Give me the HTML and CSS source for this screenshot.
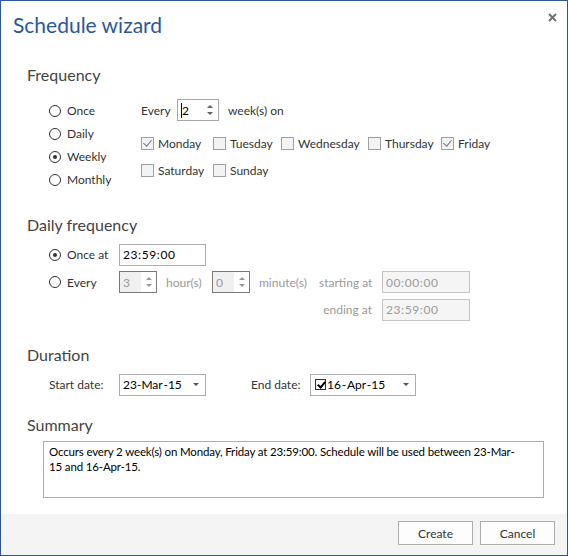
FILE: index.html
```html
<!DOCTYPE html>
<html>
<head>
    <meta charset="UTF-8">
    <meta name="viewport" content="width=device-width, initial-scale=1.0">
    <title>Schedule wizard</title>
    <link rel="stylesheet" href="styles.css">
</head>
<body>
    <div class="dialog">
        <header class="title-bar">
            <h1>Schedule wizard</h1>
            <svg class="close" width="9" height="9" viewBox="0 0 9 9"><path d="M1 1L8 8M8 1L1 8" stroke="#707070" stroke-width="2"/></svg>
        </header>

        <main class="content">
            <section class="group freq-group">
                <h2>Frequency</h2>
                <div class="freq">
                    <div class="radios">
                        <label class="opt"><span class="radio"></span>Once</label>
                        <label class="opt"><span class="radio"></span>Daily</label>
                        <label class="opt"><span class="radio on"></span>Weekly</label>
                        <label class="opt"><span class="radio"></span>Monthly</label>
                    </div>
                    <div class="weekly">
                        <div class="every-row">
                            <span class="every-lbl">Every</span>
                            <span class="spin week-spin"><span class="val"><i class="caret"></i>2</span><span class="arrows"><b class="up"></b><b class="down"></b></span></span>
                            <span class="weeks-lbl">week(s) on</span>
                        </div>
                        <div class="days first">
                            <label class="day w-mon"><span class="check on"></span>Monday</label>
                            <label class="day w-tue"><span class="check"></span>Tuesday</label>
                            <label class="day w-wed"><span class="check"></span>Wednesday</label>
                            <label class="day w-thu"><span class="check"></span>Thursday</label>
                            <label class="day"><span class="check on"></span>Friday</label>
                        </div>
                        <div class="days">
                            <label class="day w-mon"><span class="check"></span>Saturday</label>
                            <label class="day"><span class="check"></span>Sunday</label>
                        </div>
                    </div>
                </div>
            </section>

            <section class="group daily-group">
                <h2>Daily frequency</h2>
                <div class="row r1">
                    <label class="opt lbl-col"><span class="radio on"></span>Once at</label>
                    <span class="box time">23:59:00</span>
                </div>
                <div class="row r2">
                    <label class="opt lbl-col"><span class="radio"></span>Every</label>
                    <span class="spin small off"><span class="val">3</span><span class="arrows"><b class="up"></b><b class="down"></b></span></span>
                    <span class="muted unit hours">hour(s)</span>
                    <span class="spin small off"><span class="val">0</span><span class="arrows"><b class="up"></b><b class="down"></b></span></span>
                    <span class="muted unit minutes">minute(s)</span>
                    <span class="muted range-lbl">starting at</span>
                    <span class="box time range off">00:00:00</span>
                </div>
                <div class="row r3">
                    <span class="muted range-lbl">ending at</span>
                    <span class="box time range off">23:59:00</span>
                </div>
            </section>

            <section class="group duration-group">
                <h2>Duration</h2>
                <div class="row">
                    <span class="lbl-col">Start date:</span>
                    <span class="box combo start"><span>23-Mar&#8202;-15</span><b class="drop"></b></span>
                    <span class="end-lbl">End date:</span>
                    <span class="box combo end"><span><span class="tick"></span>16&#8202;-&#8202;Apr&#8202;-15</span><b class="drop"></b></span>
                </div>
            </section>

            <section class="group summary-group">
                <h2>Summary</h2>
                <div class="summary">Occurs every 2 week(s) on Monday, Friday at 23:59:00. Schedule will be used between 23-Mar-15 and 16-Apr-15.</div>
            </section>
        </main>

        <footer class="buttons">
            <button>Create</button>
            <button>Cancel</button>
        </footer>
    </div>
</body>
</html>
```

FILE: styles.css
```css
* { box-sizing: border-box; }
body { margin: 0; font-family: Lato, "Open Sans", sans-serif; font-size: 12px; color: #333; background: #fff; }

.dialog { width: 568px; height: 556px; border: 1px solid #2b579a; display: flex; flex-direction: column; background: #fff; }

.title-bar { display: flex; justify-content: space-between; align-items: flex-start; padding: 9px 10px 0 12px; height: 48px; }
.title-bar h1 { margin: 0; font-size: 21px; font-weight: normal; line-height: 30px; color: #2b579a; }
.close { margin-top: 3px; }

.content { flex: 1; padding-left: 26px; }
.group h2 { margin: 0; font-size: 16px; font-weight: normal; line-height: 20px; color: #444; }
.freq-group { margin-top: 16px; }
.daily-group { margin-top: 24px; }
.duration-group { margin-top: 22px; }
.summary-group { margin-top: 17px; }

.freq { display: flex; margin-top: 14px; padding-left: 22px; }
.radios { width: 92px; display: flex; flex-direction: column; }
.opt { display: flex; align-items: center; height: 23px; }

.radio { width: 12px; height: 12px; border: 1px solid #333; border-radius: 50%; margin-right: 6px; display: flex; align-items: center; justify-content: center; background: #fff; }
.radio.on::after { content: ""; width: 4px; height: 4px; border-radius: 50%; background: #333; }

.every-row { display: flex; align-items: center; height: 22px; }
.every-lbl { width: 36px; }
.weeks-lbl { margin-left: 9px; }

.spin { display: flex; height: 22px; border: 1px solid #a8a8a8; background: #fff; }
.spin .val { display: flex; align-items: center; padding-left: 3px; color: #000; flex: 1; }
.spin .arrows { width: 16px; display: flex; flex-direction: column; justify-content: center; align-items: center; gap: 4px; }
.arrows b { width: 0; height: 0; border-left: 3px solid transparent; border-right: 3px solid transparent; }
.arrows .up { border-bottom: 3px solid #606060; }
.arrows .down { border-top: 3px solid #606060; }
.week-spin { width: 42px; }
.caret { width: 1px; height: 15px; background: #000; }

.spin.small { width: 38px; }
.spin.off { border-color: #7a7a7a; }
.spin.off .val { background: #f0f0f0; color: #999; flex: none; width: 21px; }
.spin.off .arrows { flex: 1; }
.spin.off .up { border-bottom-color: #999; }
.spin.off .down { border-top-color: #999; }

.days { display: flex; align-items: center; height: 27px; }
.days.first { margin-top: 9px; }
.day { display: flex; align-items: center; }
.w-mon { width: 72px; }
.w-tue { width: 68px; }
.w-wed { width: 87px; }
.w-thu { width: 73px; }
.check { width: 13px; height: 13px; border: 1px solid #a0a0a0; background: #f3f3f3; margin-right: 4px; position: relative; }
.check.on::after { content: ""; position: absolute; left: 3px; top: 0; width: 4px; height: 7px; border: solid #777; border-width: 0 1.5px 1.5px 0; transform: rotate(40deg); }

.row { display: flex; align-items: center; padding-left: 22px; height: 27px; white-space: nowrap; }
.daily-group .r1 { margin-top: 6px; }
.daily-group .r2 { height: 28px; }
.lbl-col { width: 70px; }

.box { display: flex; align-items: center; height: 22px; border: 1px solid #abadb3; background: #fff; padding-left: 3px; color: #000; }
.time { width: 87px; letter-spacing: 0.6px; }
.time.range { width: 88px; }
.box.off { background: #f5f5f5; border-color: #c4c4c4; color: #9a9a9a; }
.muted { color: #999; }
.unit { margin-left: 9px; }
.hours { width: 46px; }
.minutes { width: 60px; }
.range-lbl { width: 63px; padding-right: 10px; text-align: right; }
.r3 .range-lbl { margin-left: 270px; }

.duration-group .row { margin-top: 6px; }
.combo { justify-content: space-between; padding-right: 6px; }
.combo.start { width: 87px; }
.combo.end { width: 106px; padding-left: 4px; }
.end-lbl { margin-left: 45px; width: 59px; }
.combo > span { display: flex; align-items: center; }
.drop { width: 0; height: 0; border-left: 3px solid transparent; border-right: 3px solid transparent; border-top: 3px solid #555; }
.tick { width: 11px; height: 11px; border: 1px solid #333; margin-right: 1px; position: relative; }
.tick::after { content: ""; position: absolute; left: 3px; top: 0; width: 3px; height: 6px; border: solid #000; border-width: 0 2px 2px 0; transform: rotate(40deg); }

.summary { margin: 6px 0 0 16px; width: 501px; height: 57px; border: 1px solid #abadb3; padding: 2px 26px 2px 5px; font-size: 11.5px; letter-spacing: -0.15px; line-height: 15px; color: #000; }

.buttons { height: 41px; background: #f4f4f4; display: flex; justify-content: flex-end; align-items: flex-start; gap: 7px; padding: 7px 12px 0 0; }
.buttons button { width: 75px; height: 24px; border: 1px solid #adadad; background: #fdfdfd; font-family: inherit; font-size: 12px; color: #333; padding: 0; }
```
